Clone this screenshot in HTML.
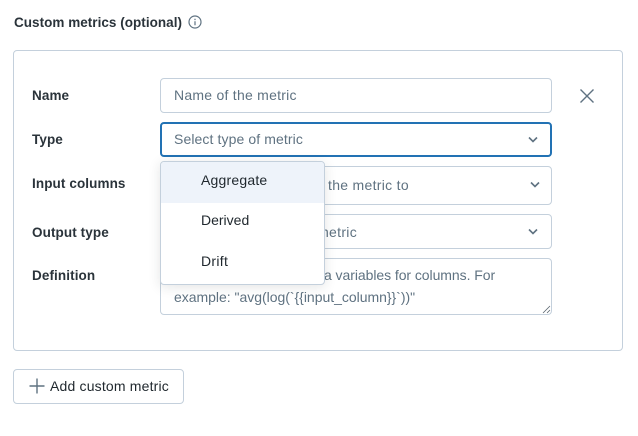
<!DOCTYPE html>
<html><head><meta charset="utf-8">
<style>
html,body{margin:0;padding:0;background:#fff;width:638px;height:436px;overflow:hidden}
body{font-family:"Liberation Sans",sans-serif;font-size:14px;color:#1f272d;position:relative}
.a{position:absolute;box-sizing:border-box}
.t{position:absolute;white-space:nowrap;line-height:20px;height:20px}
.l{font-weight:bold;color:#2a333a;font-size:13.5px;letter-spacing:.1px}
.b{border:1px solid #c4d0dc;border-radius:4px;background:#fff}
.p{color:#5f7281;letter-spacing:.3px}
.o{color:#1f272d;letter-spacing:.2px}
</style></head><body>
<div class="t" style="left:14px;top:13px;font-weight:bold;font-size:13.5px;letter-spacing:.03px;color:#2a333a">Custom metrics (optional)</div>
<svg class="a" style="left:188px;top:15px" width="14" height="14" viewBox="0 0 14 14" fill="none" stroke="#5f7281" stroke-width="1.2"><circle cx="7" cy="7" r="6"/><path d="M7 6.3V10.2M7 3.8v1.3"/></svg>

<div class="a b" style="left:13px;top:50px;width:610px;height:301px"></div>

<div class="t l" style="left:32px;top:86px">Name</div>
<div class="t l" style="left:32px;top:130px">Type</div>
<div class="t l" style="left:32px;top:174px">Input columns</div>
<div class="t l" style="left:32px;top:223px">Output type</div>
<div class="t l" style="left:32px;top:266px">Definition</div>

<div class="a b" style="left:160px;top:78px;width:392px;height:35px"></div>
<div class="t p" style="left:174px;top:85px;letter-spacing:.25px">Name of the metric</div>
<svg class="a" style="left:579px;top:88px" width="16" height="16" viewBox="0 0 16 16" fill="none" stroke="#5f7281" stroke-width="1.4"><path d="M1.5 1.5l13 13M14.5 1.5l-13 13"/></svg>

<div class="a" style="left:160px;top:122px;width:392px;height:35px;border:2px solid #2272b4;border-radius:4px"></div>
<div class="t p" style="left:174px;top:129px;letter-spacing:.1px">Select type of metric</div>
<svg class="a" style="left:528px;top:136px" width="10" height="8" viewBox="0 0 10 8" fill="none" stroke="#5f7281" stroke-width="1.6"><path d="M1 1.5l4 4 4-4"/></svg>

<div class="a b" style="left:160px;top:166px;width:392px;height:39px"></div>
<div class="t p" style="left:328px;top:175px">the metric to</div>
<svg class="a" style="left:530px;top:181px" width="10" height="8" viewBox="0 0 10 8" fill="none" stroke="#5f7281" stroke-width="1.6"><path d="M1 1.5l4 4 4-4"/></svg>

<div class="a b" style="left:160px;top:214px;width:392px;height:35px"></div>
<div class="t p" style="left:324px;top:222px;width:33px;overflow:hidden;direction:rtl">metric</div>
<svg class="a" style="left:528px;top:228px" width="10" height="8" viewBox="0 0 10 8" fill="none" stroke="#5f7281" stroke-width="1.6"><path d="M1 1.5l4 4 4-4"/></svg>

<div class="a b" style="left:160px;top:258px;width:392px;height:57px"></div>
<div class="t p" style="left:324px;top:265px;letter-spacing:-.06px">a variables for columns. For</div>
<div class="t p" style="left:174px;top:287px;letter-spacing:-.02px">example: "avg(log(`{{input_column}}`))"</div>
<svg class="a" style="left:542px;top:305px" width="9" height="9" viewBox="0 0 9 9" fill="none" stroke="#5a6570" stroke-width=".8"><path d="M1 8l7-7M5 8l3-3"/></svg>

<div class="a" style="left:160px;top:161px;width:165px;height:124px;background:#fff;border:1px solid #c4d0dc;border-radius:4px;box-shadow:0 2px 12px rgba(31,39,45,.12);overflow:hidden">
<div class="a" style="left:0;top:0;width:163px;height:41px;background:#eef3fa"></div>
</div>
<div class="t o" style="left:201px;top:170px">Aggregate</div>
<div class="t o" style="left:201px;top:210px;letter-spacing:0">Derived</div>
<div class="t o" style="left:201px;top:251px;letter-spacing:.3px">Drift</div>

<div class="a b" style="left:13px;top:369px;width:171px;height:35px"></div>
<svg class="a" style="left:29px;top:378px" width="16" height="16" viewBox="0 0 16 16" fill="none" stroke="#5f7281" stroke-width="1.4"><path d="M8 0.5v15M0.5 8h15"/></svg>
<div class="t o" style="left:50px;top:376px;letter-spacing:.18px">Add custom metric</div>
</body></html>
